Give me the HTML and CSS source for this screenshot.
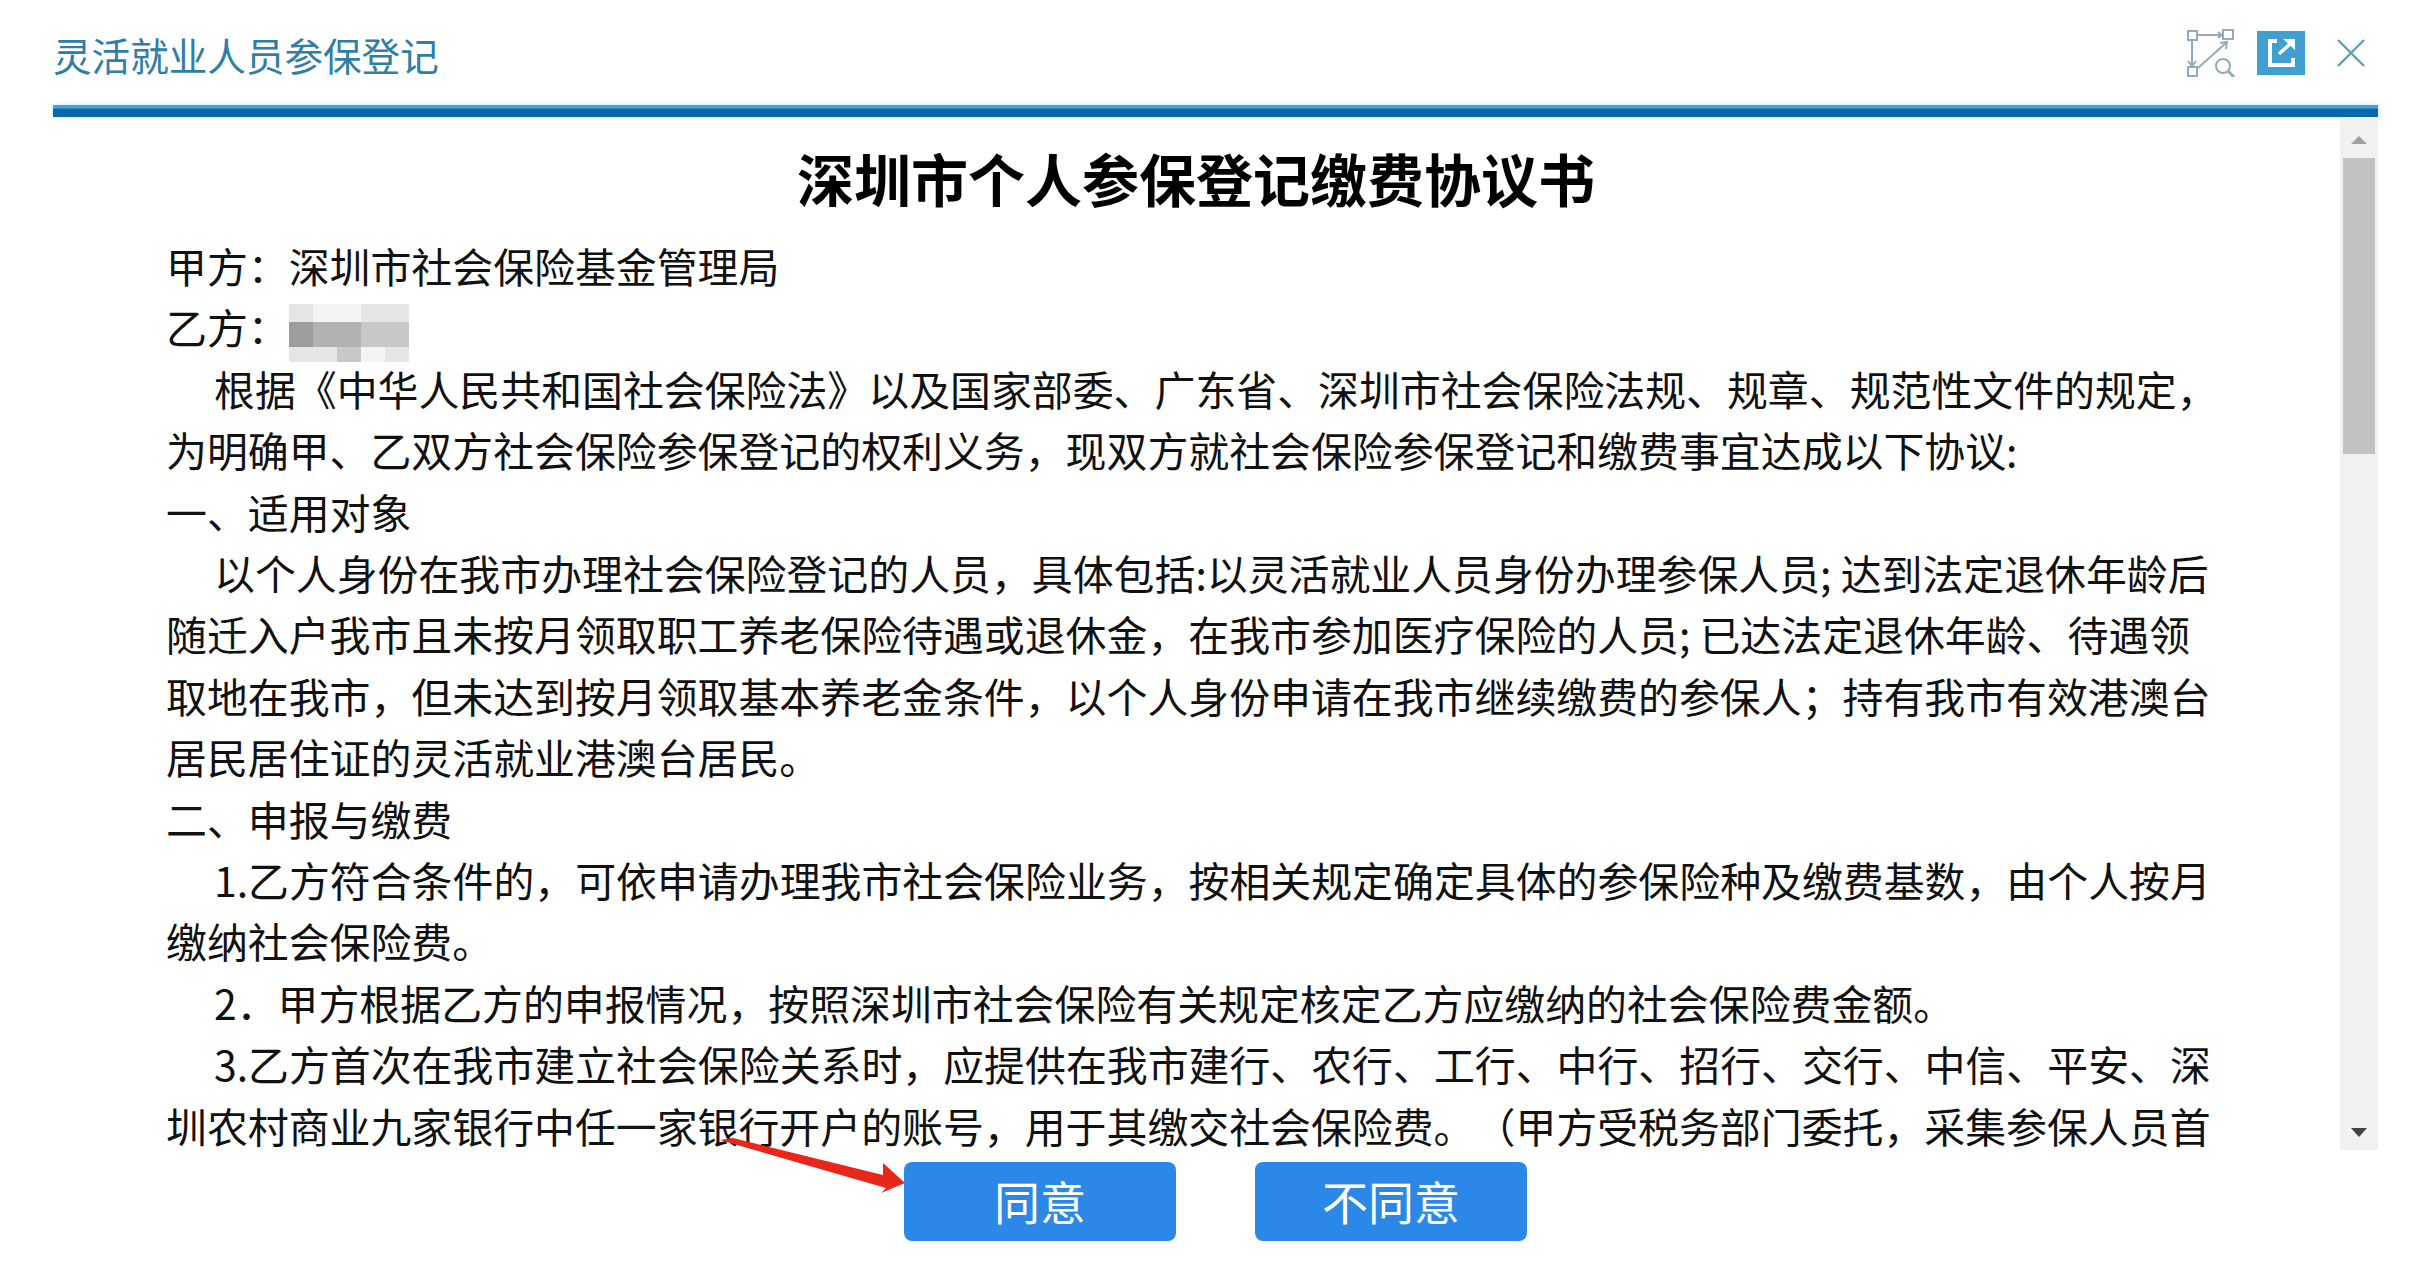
FILE: index.html
```html
<!DOCTYPE html>
<html lang="zh-CN">
<head>
    <meta charset="UTF-8">
    <title>灵活就业人员参保登记</title>
    <link rel="stylesheet" href="styles.css">
</head>
<body>
    <div class="dialog">
        <div class="dialog-head">
            <span class="dialog-title">灵活就业人员参保登记</span>
            <div class="head-icons">
                <svg class="icon-flow" viewBox="0 0 48 48" width="48" height="48">
                    <g fill="none" stroke="#93acbb" stroke-width="2">
                        <rect x="1" y="2" width="9" height="9"/>
                        <rect x="36" y="1" width="10" height="9"/>
                        <rect x="1" y="38" width="9" height="9"/>
                        <circle cx="36" cy="37" r="7"/>
                        <path d="M41 42l6 6" stroke-width="3"/>
                        <path d="M10 6h25M31 3l4 3-4 3"/>
                        <path d="M5 11v26M1 32l4 5 4-5"/>
                        <path d="M11 39L40 13M33 14l7-1-1 7"/>
                    </g>
                </svg>
                <svg class="icon-open" viewBox="0 0 48 44" width="48" height="44">
                    <rect width="48" height="44" fill="#3f9fd0"/>
                    <path d="M20 10H13V34H36V27" fill="none" stroke="#fff" stroke-width="4"/>
                    <path d="M22 23L34 12" fill="none" stroke="#fff" stroke-width="3.5"/>
                    <path d="M26 8H38V19Z" fill="#fff"/>
                </svg>
                <svg class="icon-close" viewBox="0 0 28 28" width="28" height="28">
                    <path d="M1 1L27 27M27 1L1 27" fill="none" stroke="#5f9fae" stroke-width="2.4"/>
                </svg>
            </div>
        </div>
        <div class="head-bar"></div>

        <div class="dialog-body">
            <div class="doc">
                <h1>深圳市个人参保登记缴费协议书</h1>
                <p>甲方：深圳市社会保险基金管理局</p>
                <p>乙方：<span class="mosaic"><i class="c1"></i><i class="c0"></i><i class="c0"></i><i class="c1"></i><i class="c1"></i><i class="c4"></i><i class="c3"></i><i class="c3"></i><i class="c2"></i><i class="c2"></i><i class="c1"></i><i class="c1"></i><i class="c2"></i><i class="c0"></i><i class="c1"></i></span></p>
                <p class="indent">根据《中华人民共和国社会保险法》以及国家部委、广东省、深圳市社会保险法规、规章、规范性文件的规定，为明确甲、乙双方社会保险参保登记的权利义务，现双方就社会保险参保登记和缴费事宜达成以下协议:</p>
                <p>一、适用对象</p>
                <p class="indent">以个人身份在我市办理社会保险登记的人员，具体包括:以灵活就业人员身份办理参保人员; 达到法定退休年龄后随迁入户我市且未按月领取职工养老保险待遇或退休金，在我市参加医疗保险的人员; 已达法定退休年龄、待遇领取地在我市，但未达到按月领取基本养老金条件，以个人身份申请在我市继续缴费的参保人；持有我市有效港澳台居民居住证的灵活就业港澳台居民。</p>
                <p>二、申报与缴费</p>
                <p class="indent">1.乙方符合条件的，可依申请办理我市社会保险业务，按相关规定确定具体的参保险种及缴费基数，由个人按月缴纳社会保险费。</p>
                <p class="indent">2．甲方根据乙方的申报情况，按照深圳市社会保险有关规定核定乙方应缴纳的社会保险费金额。</p>
                <p class="indent">3.乙方首次在我市建立社会保险关系时，应提供在我市建行、农行、工行、中行、招行、交行、中信、平安、深圳农村商业九家银行中任一家银行开户的账号，用于其缴交社会保险费。（甲方受税务部门委托，采集参保人员首</p>
            </div>
            <div class="scrollbar">
                <div class="scroll-btn"><span class="arrow-up"></span></div>
                <div class="scroll-thumb"></div>
                <div class="scroll-btn scroll-btn-down"><span class="arrow-down"></span></div>
            </div>
        </div>

        <div class="dialog-foot">
            <button class="btn" type="button">同意</button>
            <button class="btn" type="button">不同意</button>
        </div>
    </div>

    <!-- red arrow drawn over the page -->
    <svg class="mark-arrow" viewBox="0 0 190 62" width="190" height="62">
        <path d="M2 5L15 3L165 40L165 28L187 48L163 58L168 53Z" fill="#e8261c"/>
    </svg>
</body>
</html>
```

FILE: styles.css
```css
* {
    box-sizing: border-box;
}

body {
    margin: 0;
    height: 1280px;
    overflow: hidden;
    background-color: #fff;
    font-family: "Noto Sans CJK SC", "Liberation Sans", sans-serif;
    color: #111;
}

.dialog {
    width: 2325px;
    margin-left: 53px;
}

.dialog-head {
    display: flex;
    justify-content: space-between;
    align-items: center;
    height: 105px;
    padding-right: 13px;
}

.dialog-title {
    font-size: 38.6px;
    color: #2f7ea5;
    position: relative;
    top: 1px;
}

.head-icons {
    display: flex;
    align-items: center;
    gap: 22px;
}

.icon-close {
    margin-left: 10px;
}

.head-bar {
    height: 12px;
    background: linear-gradient(#4aa0dc 0, #4aa0dc 25%, #0b66ac 35%, #0b66ac 100%);
    box-shadow: 0 0 5px #bfe3f7;
}

.dialog-body {
    display: flex;
    height: 1033px;
}

.doc {
    flex: 1;
    padding-left: 113px;
    padding-right: 110px;
    font-size: 40.9px;
    line-height: 61.4px;
    text-spacing-trim: space-all;
}

h1 {
    margin: 28px 0 26px;
    padding-right: 4px;
    text-align: center;
    font-size: 57px;
    line-height: 64px;
    font-weight: 700;
    color: #000;
}

p {
    margin: 0;
}

.indent {
    text-indent: 48px;
}

.mosaic {
    display: inline-grid;
    grid-template-columns: repeat(5, 24px);
    grid-template-rows: 18px 25px 15px;
    margin: -10px 0;
    vertical-align: middle;
    text-indent: 0;
}

.mosaic i {
    display: block;
}

.c0 { background-color: #f4f4f4; }
.c1 { background-color: #e6e6e6; }
.c2 { background-color: #c8c8c8; }
.c3 { background-color: #b2b2b2; }
.c4 { background-color: #9d9d9d; }

.scrollbar {
    display: flex;
    flex-direction: column;
    width: 38px;
    padding-top: 5px;
    background-color: #f1f1f1;
}

.scroll-btn {
    display: flex;
    justify-content: center;
    align-items: center;
    height: 36px;
}

.scroll-btn-down {
    margin-top: auto;
}

.arrow-up {
    border-left: 8px solid transparent;
    border-right: 8px solid transparent;
    border-bottom: 8px solid #a0a0a0;
}

.arrow-down {
    border-left: 8px solid transparent;
    border-right: 8px solid transparent;
    border-top: 9px solid #444;
}

.scroll-thumb {
    height: 296px;
    margin: 0 3px;
    background-color: #c1c1c1;
}

.dialog-foot {
    display: flex;
    justify-content: center;
    gap: 79px;
    padding-top: 12px;
}

.btn {
    width: 272px;
    height: 79px;
    padding: 0 0 4px;
    border: none;
    border-radius: 8px;
    background-color: #2b88e6;
    color: #fff;
    font-family: inherit;
    font-size: 46px;
    line-height: 1;
}

.mark-arrow {
    position: absolute;
    left: 718px;
    top: 1135px;
}
```
